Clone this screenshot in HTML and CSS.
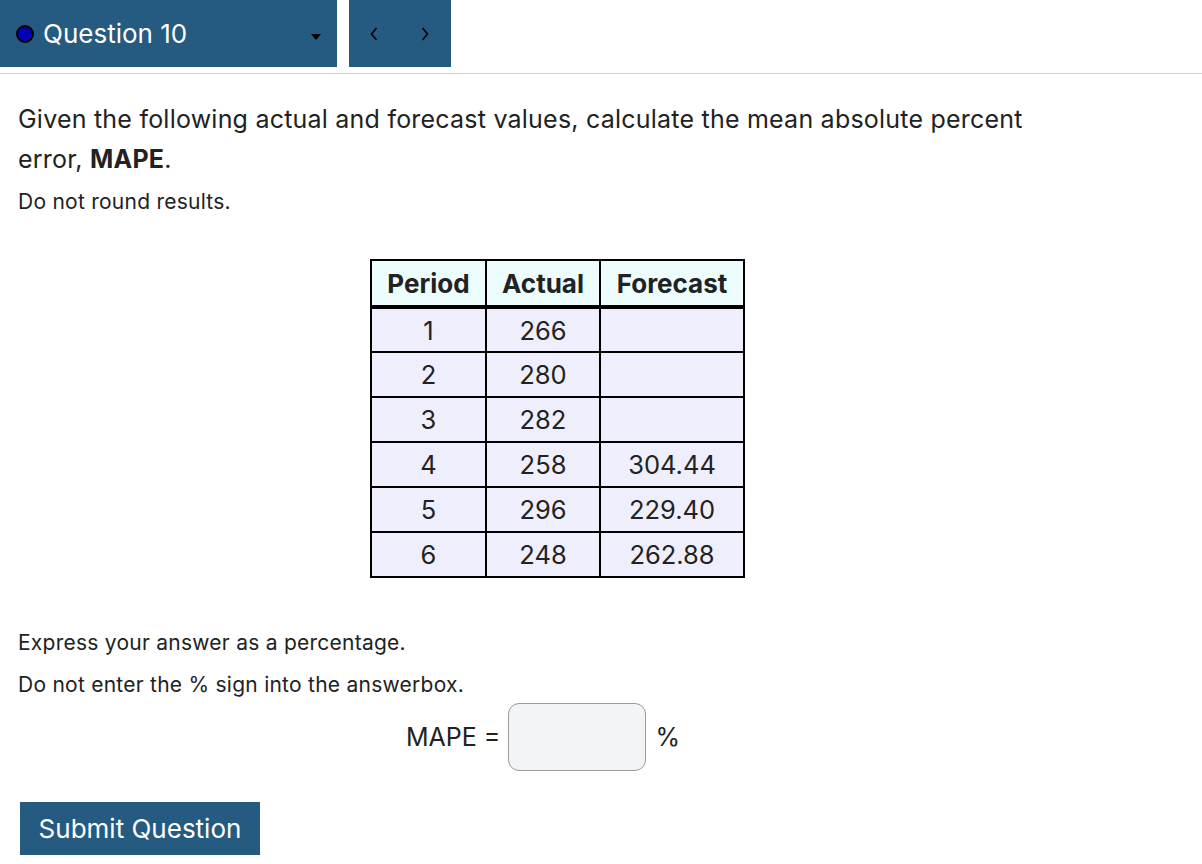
FILE: index.html
```html
<!DOCTYPE html>
<html>
<head>
<meta charset="utf-8">
<link rel="stylesheet" href="styles.css">
</head>
<body>
<div class="topbar">
  <div class="qselect">
    <span class="dot"></span>
    <span class="qlabel">Question 10</span>
    <svg class="caret" width="12" height="8" viewBox="0 0 12 8"><path d="M1 1 L11 1 L6 7 Z" fill="#000"/></svg>
  </div>
  <div class="qnav">
    <svg width="10" height="16" viewBox="0 0 10 16"><path d="M7.5 2 L2.5 8 L7.5 14" fill="none" stroke="#000" stroke-width="1.6"/></svg>
    <svg width="10" height="16" viewBox="0 0 10 16"><path d="M2.5 2 L7.5 8 L2.5 14" fill="none" stroke="#000" stroke-width="1.6"/></svg>
  </div>
</div>
<div class="rule"></div>
<main class="content">
  <p class="lead">Given the following actual and forecast values, calculate the mean absolute percent error, <b>MAPE</b>.</p>
  <p class="note first">Do not round results.</p>
  <table class="data">
    <thead>
      <tr><th>Period</th><th>Actual</th><th>Forecast</th></tr>
    </thead>
    <tbody>
      <tr><td>1</td><td>266</td><td></td></tr>
      <tr><td>2</td><td>280</td><td></td></tr>
      <tr><td>3</td><td>282</td><td></td></tr>
      <tr><td>4</td><td>258</td><td>304.44</td></tr>
      <tr><td>5</td><td>296</td><td>229.40</td></tr>
      <tr><td>6</td><td>248</td><td>262.88</td></tr>
    </tbody>
  </table>
  <p class="note express">Express your answer as a percentage.</p>
  <p class="note">Do not enter the % sign into the answerbox.</p>
  <div class="answer">
    <span class="alabel">MAPE =</span>
    <input class="abox" type="text">
    <span class="pct">%</span>
  </div>
  <button class="submit">Submit Question</button>
</main>
</body>
</html>
```
FILE: styles.css
```css
* { box-sizing: border-box; }
body {
  margin: 0;
  font-family: Inter, "Noto Sans", "Liberation Sans", sans-serif;
  color: #222;
  background: #fff;
}
.topbar {
  display: flex;
  gap: 12px;
  height: 67px;
}
.qselect {
  width: 337px;
  background: #255b81;
  display: flex;
  align-items: center;
  padding-left: 16px;
  padding-right: 15px;
}
.dot {
  width: 18px;
  height: 18px;
  border-radius: 50%;
  background: #0000b4;
  border: 2px solid #000;
  margin-right: 9px;
}
.qlabel {
  color: #fff;
  font-size: 26px;
  flex: 1;
}
.caret { margin-top: 6px; }
.qnav {
  width: 102px;
  background: #255b81;
  display: flex;
  align-items: center;
  justify-content: space-between;
  padding: 0 21px 0 20px;
}
.rule {
  margin-top: 6px;
  height: 1px;
  background: #cfcfcf;
}
.content {
  padding-left: 18px;
}
.lead {
  margin: 25px 0 0;
  font-size: 25px;
  line-height: 40px;
  width: 1020px;
  letter-spacing: 0.22px;
}
.note {
  margin: 6px 0 0;
  font-size: 21px;
  line-height: 30px;
  letter-spacing: 0.25px;
}
.note.first { margin-top: 8px; }
.data {
  border-collapse: collapse;
  margin: 42px 0 0 352px;
  font-size: 25.5px;
}
.data th, .data td {
  border: 2px solid #000;
  text-align: center;
  padding: 0 10px;
  height: 45px;
}
.data th {
  background: #edfcfd;
  border-bottom: 4px solid #000;
  font-weight: 700;
  font-size: 26px;
  height: 47px;
}
.data td { background: #efeefc; }
.data td:nth-child(1) { width: 115px; }
.data td:nth-child(2) { width: 114px; }
.data td:nth-child(3) { width: 144px; }
.express { margin-top: 50px; }
.express + .note { margin-top: 12px; }
.answer {
  display: flex;
  align-items: center;
  margin: 3px 0 0 388px;
  font-size: 25px;
}
.alabel { margin-right: 8px; }
.abox {
  width: 138px;
  height: 68px;
  border: 1px solid #9a9a9a;
  border-radius: 11px;
  background: #f3f4f6;
  margin-right: 9px;
  font-size: 24px;
}
.submit {
  margin: 31px 0 0 2px;
  width: 240px;
  height: 53px;
  background: #255b81;
  color: #fff;
  border: none;
  font-family: inherit;
  font-size: 26px;
  padding: 0;
}
```
